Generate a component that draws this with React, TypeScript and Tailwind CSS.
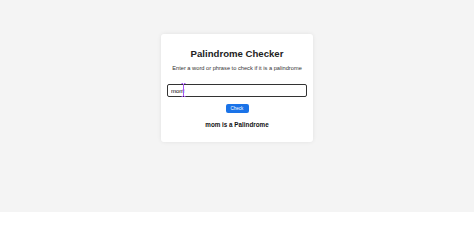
export default function App() {
  return (
    <div className="h-[212px] overflow-hidden bg-[#f4f4f4] pt-[34px] font-['Liberation_Sans',Arial,sans-serif]">
      <div className="mx-auto w-[152px] rounded-[3px] bg-white px-[6px] pt-[14px] pb-[12px] text-center shadow-[0_0_4px_rgba(0,0,0,0.08)]">
        <h1 className="text-[9.6px] leading-[12px] font-bold text-[#222]">Palindrome Checker</h1>
        <p className="mt-[4px] text-[5.7px] leading-[8px] text-[#333] whitespace-nowrap">
          Enter a word or phrase to check if it is a palindrome
        </p>
        <div className="relative mt-[12px]">
          <input
            readOnly
            value="mom"
            className="block h-[13px] w-full rounded-[2px] border border-[#333] bg-white px-[3px] text-[6px] text-black outline-none"
          />
          <svg className="absolute left-[14px] top-[-1px]" width="5" height="14" viewBox="0 0 5 14">
            <path d="M0.5 0.5h1.5M3 0.5h1.5M2.5 1v12M0.5 13.5h1.5M3 13.5h1.5M1.5 7h2" stroke="#a855f7" strokeWidth="1" fill="none" />
          </svg>
        </div>
        <button className="mx-auto mt-[7px] block h-[9px] w-[23px] rounded-[2px] bg-[#1a73e8] text-[4.5px] leading-[9px] text-white">
          Check
        </button>
        <p className="mt-[7px] text-[6.3px] leading-[10px] font-bold text-[#111]">mom is a Palindrome</p>
      </div>
    </div>
  );
}
